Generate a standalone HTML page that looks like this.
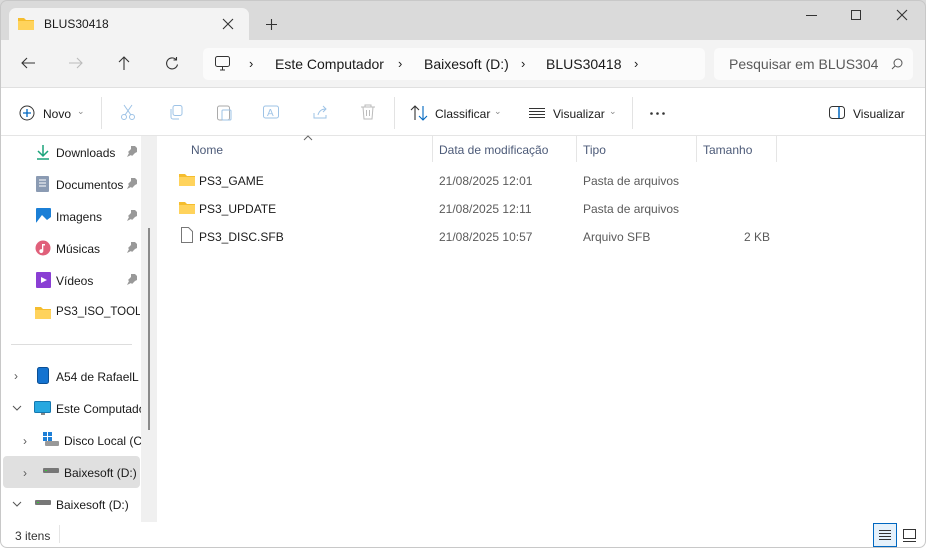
<!DOCTYPE html><html><head><meta charset="utf-8"><style>
*{box-sizing:border-box;margin:0;padding:0}
body{width:926px;height:548px;overflow:hidden;font-family:"Liberation Sans",sans-serif;font-size:12px;color:#1a1a1a;background:#fff;position:relative}
.a{position:absolute}
.t{position:absolute;white-space:nowrap}
svg{position:absolute;overflow:visible}
.g{color:#5a5a5a}
</style></head><body>
<div class="a" style="left:0;top:0;width:926px;height:40px;background:#dadada"></div>
<div class="a" style="left:9px;top:8px;width:240px;height:34px;background:#f3f3f3;border-radius:7px 7px 0 0"></div>
<svg style="left:18px;top:16px" width="16" height="14"><path d="M0 2h6l2 2h8v10H0z" fill="#f5bd2e"/><path d="M0 5h16v9H0z" fill="#ffd35c"/></svg>
<div class="t" style="left:44px;top:17px">BLUS30418</div>
<svg style="left:223px;top:19px" width="10" height="10" stroke="#333" stroke-width="1.1"><path d="M0 0L10 10M10 0L0 10"/></svg>
<svg style="left:266px;top:19px" width="11" height="11" stroke="#333" stroke-width="1.1"><path d="M5.5 0v11M0 5.5h11"/></svg>
<div class="a" style="left:806px;top:15px;width:11px;height:1px;background:#333"></div>
<div class="a" style="left:851px;top:10px;width:10px;height:10px;border:1px solid #333"></div>
<svg style="left:897px;top:10px" width="10" height="10" stroke="#333" stroke-width="1.1"><path d="M0 0L10 10M10 0L0 10"/></svg>
<div class="a" style="left:0;top:40px;width:926px;height:48px;background:#f3f3f3;border-bottom:1px solid #e0e0e0"></div>
<svg style="left:21px;top:57px" width="14" height="12" fill="none" stroke="#333" stroke-width="1.1"><path d="M14 6H1M6 1L1 6l5 5"/></svg>
<svg style="left:69px;top:57px" width="14" height="12" fill="none" stroke="#bbb" stroke-width="1.1"><path d="M0 6h13M8 1l5 5-5 5"/></svg>
<svg style="left:118px;top:56px" width="12" height="14" fill="none" stroke="#333" stroke-width="1.1"><path d="M6 14V1M1 6l5-5 5 5"/></svg>
<svg style="left:166px;top:57px" width="13" height="13" fill="none" stroke="#333" stroke-width="1.1"><path d="M11.5 7.5A5.5 5.5 0 1 1 10 2.5"/><path d="M10.5 0v3h-3"/></svg>
<div class="a" style="left:203px;top:48px;width:502px;height:32px;background:#fbfbfb;border-radius:5px"></div>
<svg style="left:215px;top:56px" width="16" height="16"><rect x="0.5" y="0.5" width="14" height="10" rx="2" fill="none" stroke="#333"/><path d="M5 14h5M7.5 11v3" stroke="#333"/></svg>
<div class="t" style="left:249px;top:56px;font-size:13px">›</div>
<div class="t" style="left:275px;top:56px;font-size:14px">Este Computador</div>
<div class="t" style="left:398px;top:56px;font-size:13px">›</div>
<div class="t" style="left:424px;top:56px;font-size:14px">Baixesoft (D:)</div>
<div class="t" style="left:521px;top:56px;font-size:13px">›</div>
<div class="t" style="left:546px;top:56px;font-size:14px">BLUS30418</div>
<div class="t" style="left:634px;top:56px;font-size:13px">›</div>
<div class="a" style="left:714px;top:48px;width:199px;height:32px;background:#fbfbfb;border-radius:5px"></div>
<div class="t g" style="left:729px;top:56px;font-size:14px">Pesquisar em BLUS304</div>
<svg style="left:891px;top:58px" width="12" height="12"><circle cx="7" cy="5" r="4" fill="none" stroke="#555"/><path d="M4 8L1 11" stroke="#555"/></svg>
<svg style="left:19px;top:105px" width="16" height="16"><circle cx="8" cy="8" r="7" fill="none" stroke="#333"/><path d="M8 4v8M4 8h8" stroke="#0067c0" stroke-width="1.3"/></svg>
<div class="t" style="left:43px;top:107px">Novo</div><div class="t" style="left:77px;top:106px;font-size:9px;color:#888">⌄</div>
<div class="a" style="left:101px;top:97px;width:1px;height:32px;background:#e3e3e3"></div>
<svg style="left:120px;top:104px" width="16" height="16" fill="none" stroke="#9ec3e6"><circle cx="4" cy="13" r="2.5"/><circle cx="12" cy="13" r="2.5"/><path d="M5 11L12 1M11 11L4 1"/></svg>
<svg style="left:169px;top:105px" width="16" height="16" fill="none" stroke="#9ec3e6"><rect x="4" y="0.5" width="9" height="10" rx="2"/><path d="M2 4v8a2 2 0 002 2h6"/></svg>
<svg style="left:217px;top:104px" width="16" height="17" fill="none" stroke="#aaa"><rect x="0.5" y="2" width="12" height="14" rx="2"/><rect x="5" y="6" width="9" height="10" rx="1" stroke="#9ec3e6"/></svg>
<svg style="left:263px;top:105px" width="18" height="16" fill="none" stroke="#9ec3e6"><rect x="0.5" y="1" width="15" height="12" rx="2"/><text x="4" y="11" font-size="10" fill="#9ec3e6" stroke="none">A</text></svg>
<svg style="left:313px;top:105px" width="16" height="16" fill="none" stroke="#9ec3e6"><path d="M1 8v5h12v-3M5 10c1-4 4-6 8-6M10 1l3 3-3 3"/></svg>
<svg style="left:361px;top:104px" width="14" height="16" fill="none" stroke="#bbb"><path d="M0 3h14M4 3V1h6v2M2 3l1 12h8l1-12M5.5 6v6M8.5 6v6"/></svg>
<div class="a" style="left:394px;top:97px;width:1px;height:32px;background:#e3e3e3"></div>
<svg style="left:411px;top:105px" width="18" height="16" fill="none" stroke-width="1.1"><path d="M4 15V1M0 5l4-4 4 4" stroke="#333"/><path d="M12 1v14M8 11l4 4 4-4" stroke="#0067c0"/></svg>
<div class="t" style="left:435px;top:107px">Classificar</div><div class="t" style="left:494px;top:106px;font-size:9px;color:#888">⌄</div>
<svg style="left:529px;top:108px" width="16" height="10" stroke="#333"><path d="M0 .5h16M0 3.5h16M0 6.5h16M0 9.5h16"/></svg>
<div class="t" style="left:553px;top:107px">Visualizar</div><div class="t" style="left:609px;top:106px;font-size:9px;color:#888">⌄</div>
<div class="a" style="left:632px;top:97px;width:1px;height:32px;background:#e3e3e3"></div>
<svg style="left:650px;top:112px" width="16" height="3" fill="#333"><circle cx="1.5" cy="1.5" r="1.3"/><circle cx="7.5" cy="1.5" r="1.3"/><circle cx="13.5" cy="1.5" r="1.3"/></svg>
<svg style="left:829px;top:106px" width="16" height="13" fill="none"><rect x="0.5" y="0.5" width="15" height="12" rx="3" stroke="#333"/><path d="M10 1v11" stroke="#0067c0" stroke-width="1.5"/></svg>
<div class="t" style="left:853px;top:107px">Visualizar</div>
<div class="a" style="left:0;top:135px;width:926px;height:1px;background:#e5e5e5"></div>
<div class="a" style="left:141px;top:136px;width:16px;height:386px;background:#f0f0f0"></div>
<div class="a" style="left:148px;top:228px;width:2px;height:202px;background:#8a8a8a"></div>
<svg style="left:36px;top:144px" width="14" height="16" stroke="#1aa37a" stroke-width="1.5" fill="none"><path d="M7 1v10M2 7l5 5 5-5M1 15h12"/></svg>
<div class="t" style="left:56px;top:146px">Downloads</div>
<svg style="left:36px;top:176px" width="14" height="16"><rect width="13" height="16" rx="1" fill="#8b9bb3"/><path d="M3 4h7M3 7h7M3 10h7" stroke="#fff"/></svg>
<div class="t" style="left:56px;top:178px">Documentos</div>
<svg style="left:36px;top:208px" width="16" height="16"><rect width="15" height="15" rx="1" fill="#1b7fd6"/><path d="M0 15L6 7l5 5 4-3v6z" fill="#fff"/></svg>
<div class="t" style="left:56px;top:210px">Imagens</div>
<svg style="left:35px;top:240px" width="16" height="16"><circle cx="8" cy="8" r="7.5" fill="#e0607a"/><path d="M7 4h3v1.5H8.3V11a2 2 0 11-1.3-1.8z" fill="#fff"/></svg>
<div class="t" style="left:56px;top:242px">Músicas</div>
<svg style="left:36px;top:272px" width="15" height="16"><rect width="15" height="16" rx="1" fill="#8a3fd4"/><path d="M5 5l6 3-6 3z" fill="#fff"/></svg>
<div class="t" style="left:56px;top:274px">Vídeos</div>
<svg style="left:126px;top:146px" width="11" height="11" fill="#999"><path d="M5 0h4l2 2v4l-2 1-3 3-1-1-4 2 2-4-1-1 3-3z"/></svg>
<svg style="left:126px;top:178px" width="11" height="11" fill="#999"><path d="M5 0h4l2 2v4l-2 1-3 3-1-1-4 2 2-4-1-1 3-3z"/></svg>
<svg style="left:126px;top:210px" width="11" height="11" fill="#999"><path d="M5 0h4l2 2v4l-2 1-3 3-1-1-4 2 2-4-1-1 3-3z"/></svg>
<svg style="left:126px;top:242px" width="11" height="11" fill="#999"><path d="M5 0h4l2 2v4l-2 1-3 3-1-1-4 2 2-4-1-1 3-3z"/></svg>
<svg style="left:126px;top:274px" width="11" height="11" fill="#999"><path d="M5 0h4l2 2v4l-2 1-3 3-1-1-4 2 2-4-1-1 3-3z"/></svg>
<svg style="left:35px;top:305px" width="16" height="14"><path d="M0 2h6l2 2h8v10H0z" fill="#f5bd2e"/><path d="M0 5h16v9H0z" fill="#ffd35c"/></svg>
<div class="t" style="left:56px;top:306px;width:84px;overflow:hidden;font-size:11.5px">PS3_ISO_TOOLS</div>
<div class="a" style="left:11px;top:344px;width:121px;height:1px;background:#ddd"></div>
<div class="t g" style="left:14px;top:369px">›</div>
<svg style="left:37px;top:367px" width="12" height="17"><rect x="0.5" y="0.5" width="11" height="16" rx="2" fill="#1473d0" stroke="#0b4f94"/></svg>
<div class="t" style="left:56px;top:370px">A54 de RafaelL</div>
<svg style="left:12px;top:405px" width="10" height="6" fill="none" stroke="#555"><path d="M1 1l4 4 4-4"/></svg>
<svg style="left:34px;top:401px" width="18" height="16"><rect x="0.5" y="0.5" width="16" height="11" rx="1" fill="#27a8e0" stroke="#1478b0"/><path d="M7 13h4" stroke="#888" stroke-width="2"/></svg>
<div class="t" style="left:56px;top:402px;width:85px;overflow:hidden">Este Computador</div>
<div class="t g" style="left:23px;top:434px">›</div>
<svg style="left:43px;top:432px" width="18" height="16"><rect x="0" y="0" width="4" height="4" fill="#1e7fd6"/><rect x="5" y="0" width="4" height="4" fill="#1e7fd6"/><rect x="0" y="5" width="4" height="4" fill="#1e7fd6"/><rect x="5" y="5" width="4" height="4" fill="#1e7fd6"/><rect x="2" y="9" width="14" height="5" rx="1" fill="#999"/></svg>
<div class="t" style="left:64px;top:434px;width:77px;overflow:hidden">Disco Local (C:)</div>
<div class="a" style="left:3px;top:456px;width:137px;height:32px;background:#e0e0e0;border-radius:4px"></div>
<div class="t g" style="left:23px;top:466px">›</div>
<svg style="left:43px;top:468px" width="16" height="6"><rect width="16" height="5" rx="1" fill="#777"/><rect x="2" y="2" width="2" height="1" fill="#3c3"/></svg>
<div class="t" style="left:64px;top:466px">Baixesoft (D:)</div>
<svg style="left:12px;top:501px" width="10" height="6" fill="none" stroke="#555"><path d="M1 1l4 4 4-4"/></svg>
<svg style="left:35px;top:500px" width="16" height="6"><rect width="16" height="5" rx="1" fill="#777"/><rect x="2" y="2" width="2" height="1" fill="#3c3"/></svg>
<div class="t" style="left:56px;top:498px">Baixesoft (D:)</div>
<svg style="left:304px;top:136px" width="8" height="4" fill="none" stroke="#666"><path d="M0 4l4-4 4 4"/></svg>
<div class="t" style="left:191px;top:143px;color:#4c5a78">Nome</div>
<div class="a" style="left:432px;top:136px;width:1px;height:26px;background:#e5e5e5"></div>
<div class="t" style="left:439px;top:143px;color:#4c5a78">Data de modificação</div>
<div class="a" style="left:576px;top:136px;width:1px;height:26px;background:#e5e5e5"></div>
<div class="t" style="left:583px;top:143px;color:#4c5a78">Tipo</div>
<div class="a" style="left:696px;top:136px;width:1px;height:26px;background:#e5e5e5"></div>
<div class="t" style="left:703px;top:143px;color:#4c5a78">Tamanho</div>
<div class="a" style="left:776px;top:136px;width:1px;height:26px;background:#e5e5e5"></div>
<svg style="left:179px;top:172px" width="16" height="14"><path d="M0 2h6l2 2h8v10H0z" fill="#f5bd2e"/><path d="M0 5h16v9H0z" fill="#ffd35c"/></svg>
<div class="t" style="left:199px;top:174px">PS3_GAME</div>
<div class="t g" style="left:439px;top:174px">21/08/2025 12:01</div>
<div class="t g" style="left:583px;top:174px">Pasta de arquivos</div>
<svg style="left:179px;top:200px" width="16" height="14"><path d="M0 2h6l2 2h8v10H0z" fill="#f5bd2e"/><path d="M0 5h16v9H0z" fill="#ffd35c"/></svg>
<div class="t" style="left:199px;top:202px">PS3_UPDATE</div>
<div class="t g" style="left:439px;top:202px">21/08/2025 12:11</div>
<div class="t g" style="left:583px;top:202px">Pasta de arquivos</div>
<svg style="left:181px;top:227px" width="12" height="16" fill="#fff" stroke="#777"><path d="M.5.5h7l4 4v11H.5z"/></svg>
<div class="t" style="left:199px;top:230px">PS3_DISC.SFB</div>
<div class="t g" style="left:439px;top:230px">21/08/2025 10:57</div>
<div class="t g" style="left:583px;top:230px">Arquivo SFB</div>
<div class="t g" style="left:744px;top:230px">2 KB</div>
<div class="t" style="left:15px;top:529px;color:#333">3 itens</div>
<div class="a" style="left:59px;top:525px;width:1px;height:18px;background:#e5e5e5"></div>
<div class="a" style="left:873px;top:523px;width:24px;height:24px;border:1px solid #0067c0;background:#e5f1fb"></div>
<svg style="left:879px;top:530px" width="12" height="10" stroke="#333"><path d="M0 .5h12M0 3.5h12M0 6.5h12M0 9.5h12"/></svg>
<svg style="left:903px;top:529px" width="14" height="13" fill="none" stroke="#333"><rect x=".5" y=".5" width="12" height="9"/><path d="M0 12.5h13"/></svg>
<div class="a" style="left:0;top:0;width:926px;height:548px;border:1px solid #c8c8c8;border-radius:7px;pointer-events:none"></div>
</body></html>
